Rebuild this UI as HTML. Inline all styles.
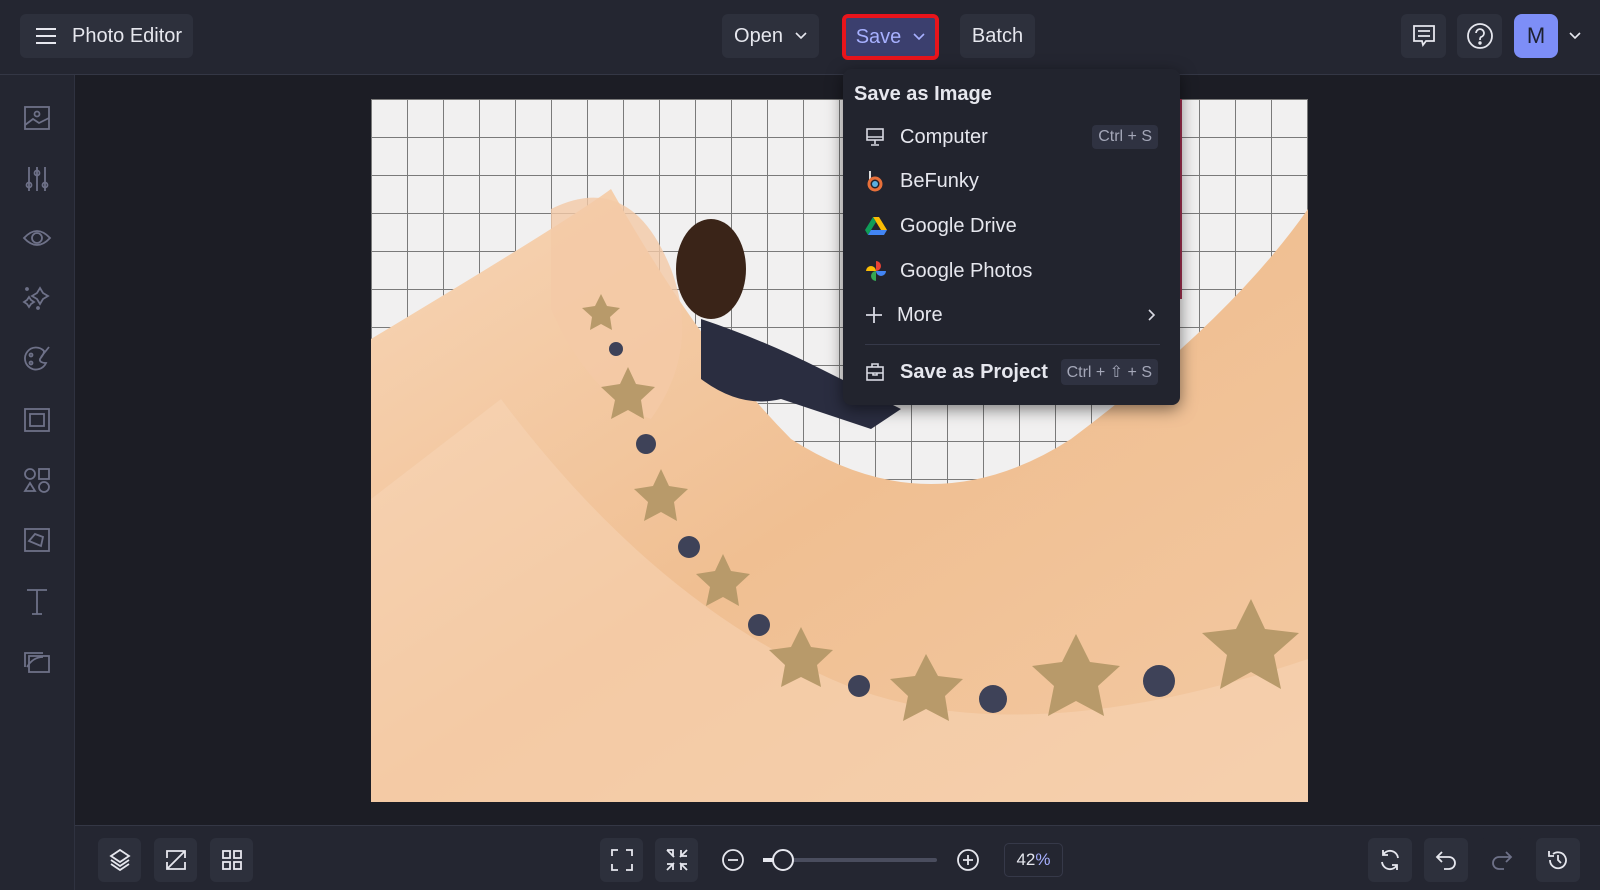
<!DOCTYPE html>
<html><head><meta charset="utf-8"><style>
*{margin:0;padding:0;box-sizing:border-box}
body{width:1600px;height:890px;background:#1c1d25;font-family:"Liberation Sans",sans-serif;color:#e6e7ee;position:relative;overflow:hidden}
.top{position:absolute;left:0;top:0;width:1600px;height:75px;background:#242631;border-bottom:1px solid #343745}
.side{position:absolute;left:0;top:75px;width:75px;height:815px;background:#242631;border-right:1px solid #2f3240}
.bot{position:absolute;left:75px;top:825px;width:1525px;height:65px;background:#242631;border-top:1px solid #343745}
.btn{position:absolute;background:#2d303c;border-radius:6px;display:flex;align-items:center;justify-content:center;font-size:20px;color:#e6e7ee}
.ico{position:absolute}
.menu{position:absolute;left:843px;top:69px;width:337px;height:336px;background:#22242e;border-radius:8px;box-shadow:0 4px 16px rgba(0,0,0,.5)}
.mi{position:absolute;left:0;width:337px;height:40px;font-size:20px;display:flex;align-items:center}
.mi .t{position:absolute;left:57px}
.kb{position:absolute;right:22px;background:#2f3241;color:#a4a7b8;font-size:16px;padding:3px 6px;border-radius:4px}
.img{position:absolute;left:371px;top:99px;width:937px;height:703px;overflow:hidden;background:#f4d0ad}
</style></head><body>
<div class="top"></div>
<div class="btn" style="left:20px;top:14px;width:173px;height:44px;justify-content:flex-start;padding-left:14px">
<svg width="24" height="20" viewBox="0 0 24 20"><path d="M2 3h20M2 10h20M2 17h20" stroke="#e6e7ee" stroke-width="2"/></svg><span style="margin-left:14px">Photo Editor</span></div>
<div class="btn" style="left:722px;top:14px;width:97px;height:44px">Open<svg style="margin-left:12px" width="12" height="8"><path d="M1 1l5 5 5-5" stroke="#e6e7ee" fill="none" stroke-width="1.6"/></svg></div>
<div class="btn" style="left:842px;top:14px;width:97px;height:46px;background:#3b3f6e;border:4px solid #e8141b;color:#a7b0ff">Save<svg style="margin-left:12px" width="12" height="8"><path d="M1 1l5 5 5-5" stroke="#a7b0ff" fill="none" stroke-width="1.6"/></svg></div>
<div class="btn" style="left:960px;top:14px;width:75px;height:44px">Batch</div>
<div class="btn" style="left:1401px;top:14px;width:45px;height:44px"><svg width="26" height="26" viewBox="0 0 26 26" fill="none" stroke="#e6e7ee" stroke-width="1.8"><path d="M3 3h20v15H15l-3 4-1-4H3z"/><path d="M7 8h12M7 13h12"/></svg></div>
<div class="btn" style="left:1457px;top:14px;width:45px;height:44px"><svg width="28" height="28" viewBox="0 0 28 28" fill="none" stroke="#e6e7ee" stroke-width="1.8"><circle cx="14" cy="14" r="12"/><path d="M10 11a4 4 0 1 1 5 4c-1 .5-1 1.5-1 3"/><circle cx="14" cy="21" r=".8" fill="#e6e7ee"/></svg></div>
<div class="btn" style="left:1514px;top:14px;width:44px;height:44px;background:#7d8ef7;color:#1e2130;font-size:22px;border-radius:8px">M</div>
<svg class="ico" style="left:1569px;top:32px" width="12" height="8"><path d="M1 1l5 5 5-5" stroke="#e6e7ee" fill="none" stroke-width="1.6"/></svg>

<div class="side"></div>
<svg class="ico" style="left:0;top:93px" width="75" height="600" viewBox="0 0 75 600" fill="none" stroke="#6e7188" stroke-width="1.8">
<rect x="25" y="14" width="24" height="22"/><circle cx="37" cy="21" r="2.5"/><path d="M25 32l8-6 6 4 10-5"/>
<path d="M29 74v24M37 74v24M45 74v24"/><circle cx="29" cy="92" r="2.5"/><circle cx="37" cy="80" r="2.5"/><circle cx="45" cy="92" r="2.5"/>
<path d="M24 145q13-14 26 0q-13 14-26 0z"/><circle cx="37" cy="145" r="5"/>
<path d="M40 195l3 5 5 3-5 3-3 5-3-5-5-3 5-3z"/><path d="M29 204l2 3 3 2-3 2-2 3-2-3-3-2 3-2z"/><circle cx="27" cy="196" r="1"/><circle cx="38" cy="215" r="1"/>
<path d="M44 258a11 11 0 1 0 2 12c-3 0-7-1-6-4 1-2 4-4 4-8z"/><path d="M41 264l8-10"/><circle cx="31" cy="262" r="1.5"/><circle cx="31" cy="270" r="1.5"/>
<rect x="25" y="316" width="24" height="22"/><rect x="30" y="321" width="14" height="12"/>
<circle cx="30" cy="381" r="5"/><rect x="39" y="376" width="10" height="10"/><path d="M25 398l5-8 5 8z"/><circle cx="44" cy="394" r="5"/>
<rect x="25" y="436" width="24" height="22"/><path d="M29 448l6-7 8 3-2 9z"/>
<path d="M27 497h20M37 497v24M32 521h10"/>
<rect x="29" y="563" width="20" height="16"/><path d="M25 574v-14h18M27 574q6-10 16-10"/>
</svg>

<div class="img">
<svg width="937" height="703" viewBox="0 0 937 703">
<defs><pattern id="g" width="36" height="38" patternUnits="userSpaceOnUse"><rect width="36" height="38" fill="#f1f0f0"/><path d="M0 0H36M0 0V38" stroke="#7a7a7a" stroke-width="2"/></pattern>
<linearGradient id="f" x1="0" y1="0" x2="1" y2="1"><stop offset="0" stop-color="#f7d5b6"/><stop offset=".5" stop-color="#f0bf92"/><stop offset="1" stop-color="#f3c9a2"/></linearGradient></defs>
<rect width="937" height="703" fill="url(#g)"/>
<path d="M810 0v200" stroke="#a03050" stroke-width="2"/>
<path d="M0 240Q200 120 240 90Q330 250 420 340Q560 430 700 340Q860 220 937 110V703H0z" fill="url(#f)"/>
<path d="M180 110q80-40 120 60q30 80-20 150q-60-20-100-110z" fill="#f4c9a6" opacity=".8"/>
<ellipse cx="340" cy="170" rx="35" ry="50" fill="#3a2418"/>
<path d="M330 220q60 20 120 50l80 40-30 20-90-30q-40 10-80-20z" fill="#2a2d40"/>
<path d="M130 300Q280 500 460 580T937 560V703H0V400z" fill="#f7d6b8" opacity=".5"/>
<g fill="#b89a6a">
<path d="M230 195l6 12 13 2-10 9 2 13-11-6-11 6 2-13-10-9 13-2z"/>
<path d="M257 268l8 17 19 3-14 13 3 19-16-9-17 9 4-19-14-13 19-3z"/>
<path d="M290 370l8 17 19 3-14 13 3 19-16-9-17 9 4-19-14-13 19-3z"/>
<path d="M352 455l8 17 19 3-14 13 3 19-16-9-17 9 4-19-14-13 19-3z"/>
<path d="M430 528l10 20 22 3-16 15 4 22-20-10-20 10 4-22-16-15 22-3z"/>
<path d="M555 555l12 22 25 3-18 17 4 25-23-12-23 12 5-25-18-17 25-3z"/>
<path d="M705 535l14 28 30 4-22 20 6 30-28-15-28 15 6-30-22-20 30-4z"/>
<path d="M880 500l14 30 34 4-25 22 7 34-30-17-31 17 7-34-25-22 34-4z"/>
</g>
<g fill="#3e4258"><circle cx="245" cy="250" r="7"/><circle cx="275" cy="345" r="10"/><circle cx="318" cy="448" r="11"/><circle cx="388" cy="526" r="11"/><circle cx="488" cy="587" r="11"/><circle cx="622" cy="600" r="14"/><circle cx="788" cy="582" r="16"/></g>
</svg></div>

<div class="menu">
<div style="position:absolute;left:11px;top:14px;font-size:20px;font-weight:bold">Save as Image</div>
<div class="mi" style="top:48px"><svg style="position:absolute;left:22px" width="20" height="20" viewBox="0 0 20 20" fill="none" stroke="#d8d9e2" stroke-width="1.6"><rect x="2" y="2" width="16" height="11"/><path d="M2 10h16M10 13v4M6 18h8"/></svg><span class="t">Computer</span><span class="kb">Ctrl + S</span></div>
<div class="mi" style="top:92px"><svg style="position:absolute;left:22px" width="20" height="22" viewBox="0 0 20 22"><path d="M5 1v10" stroke="#ddd" stroke-width="2"/><circle cx="10" cy="14" r="6" fill="none" stroke="#e8703a" stroke-width="3"/><circle cx="10" cy="14" r="3" fill="#5bb0e0"/></svg><span class="t">BeFunky</span></div>
<div class="mi" style="top:137px"><svg style="position:absolute;left:22px" width="22" height="20" viewBox="0 0 22 20"><path d="M8 1h6l8 13h-6z" fill="#fbbc04"/><path d="M8 1L0 14l3 5 8-13z" fill="#0f9d58"/><path d="M3 19h16l3-5H6z" fill="#4285f4"/></svg><span class="t">Google Drive</span></div>
<div class="mi" style="top:182px"><svg style="position:absolute;left:22px" width="22" height="22" viewBox="0 0 22 22"><path d="M11 11V1a5 5 0 0 1 0 10" fill="#ea4335"/><path d="M11 11h10a5 5 0 0 1-10 0" fill="#4285f4"/><path d="M11 11v10a5 5 0 0 1 0-10" fill="#34a853"/><path d="M11 11H1a5 5 0 0 1 10 0" fill="#fbbc04"/></svg><span class="t">Google Photos</span></div>
<div class="mi" style="top:226px"><svg style="position:absolute;left:22px" width="18" height="18"><path d="M9 1v16M1 9h16" stroke="#d8d9e2" stroke-width="1.8"/></svg><span class="t" style="left:54px">More</span><svg style="position:absolute;right:24px" width="8" height="12"><path d="M1 1l5 5-5 5" stroke="#d8d9e2" fill="none" stroke-width="1.6"/></svg></div>
<div style="position:absolute;left:22px;top:275px;width:295px;height:1px;background:#363949"></div>
<div class="mi" style="top:283px"><svg style="position:absolute;left:22px" width="20" height="20" viewBox="0 0 20 20" fill="none" stroke="#d8d9e2" stroke-width="1.6"><rect x="2" y="5" width="16" height="13"/><path d="M7 5V2h6v3M2 11h16M8 11v2h4v-2"/></svg><span class="t" style="font-weight:bold">Save as Project</span><span class="kb">Ctrl + ⇧ + S</span></div>
</div>

<div class="bot"></div>
<div class="btn" style="left:98px;top:838px;width:43px;height:44px"><svg width="26" height="26" viewBox="0 0 26 26" fill="none" stroke="#e6e7ee" stroke-width="1.8"><path d="M13 3l9 6-9 6-9-6z"/><path d="M4 13l9 6 9-6M4 17l9 6 9-6"/></svg></div>
<div class="btn" style="left:154px;top:838px;width:43px;height:44px"><svg width="24" height="24" viewBox="0 0 24 24" fill="none" stroke="#e6e7ee" stroke-width="1.8"><path d="M3 10V3h18v7M3 14v7h18v-7M3 21L21 3"/></svg></div>
<div class="btn" style="left:210px;top:838px;width:43px;height:44px"><svg width="22" height="22" viewBox="0 0 22 22" fill="none" stroke="#e6e7ee" stroke-width="1.8"><rect x="2" y="2" width="7" height="7"/><rect x="13" y="2" width="7" height="7"/><rect x="2" y="13" width="7" height="7"/><rect x="13" y="13" width="7" height="7"/></svg></div>
<div class="btn" style="left:600px;top:838px;width:43px;height:44px"><svg width="24" height="24" viewBox="0 0 24 24" fill="none" stroke="#e6e7ee" stroke-width="1.8"><path d="M2 8V2h6M16 2h6v6M22 16v6h-6M8 22H2v-6"/></svg></div>
<div class="btn" style="left:655px;top:838px;width:43px;height:44px"><svg width="24" height="24" viewBox="0 0 24 24" fill="none" stroke="#e6e7ee" stroke-width="1.8"><path d="M2 2h6v6M2 2l7 7M22 2l-7 7M16 2v6h6M2 22l7-7M2 16h6v6M22 22l-7-7M16 22v-6h6"/></svg></div>
<svg class="ico" style="left:721px;top:848px" width="24" height="24" viewBox="0 0 24 24" fill="none" stroke="#e6e7ee" stroke-width="1.8"><circle cx="12" cy="12" r="10"/><path d="M7 12h10"/></svg>
<div style="position:absolute;left:763px;top:858px;width:174px;height:4px;background:#4a4d5e;border-radius:2px"></div>
<div style="position:absolute;left:763px;top:858px;width:12px;height:4px;background:#e6e7ee"></div>
<div style="position:absolute;left:772px;top:849px;width:22px;height:22px;border:2px solid #e6e7ee;border-radius:50%;background:#242631"></div>
<svg class="ico" style="left:956px;top:848px" width="24" height="24" viewBox="0 0 24 24" fill="none" stroke="#e6e7ee" stroke-width="1.8"><circle cx="12" cy="12" r="10"/><path d="M7 12h10M12 7v10"/></svg>
<div style="position:absolute;left:1004px;top:843px;width:59px;height:34px;border:1px solid #363949;border-radius:5px;font-size:17px;display:flex;align-items:center;justify-content:center">42<span style="color:#a7b0ff">%</span></div>
<div class="btn" style="left:1368px;top:838px;width:44px;height:44px"><svg width="24" height="24" viewBox="0 0 24 24" fill="none" stroke="#e6e7ee" stroke-width="1.8"><path d="M20 10A8 8 0 0 0 5 7M4 14a8 8 0 0 0 15 3M5 2v5h5M19 22v-5h-5"/></svg></div>
<div class="btn" style="left:1424px;top:838px;width:44px;height:44px"><svg width="24" height="24" viewBox="0 0 24 24" fill="none" stroke="#e6e7ee" stroke-width="1.8"><path d="M8 4L3 9l5 5M3 9h12a6 6 0 0 1 0 12h-5"/></svg></div>
<div class="btn" style="left:1480px;top:838px;width:44px;height:44px;background:#242631"><svg width="24" height="24" viewBox="0 0 24 24" fill="none" stroke="#6e7188" stroke-width="1.8"><path d="M16 4l5 5-5 5M21 9H9a6 6 0 0 0 0 12h5"/></svg></div>
<div class="btn" style="left:1536px;top:838px;width:44px;height:44px"><svg width="24" height="24" viewBox="0 0 24 24" fill="none" stroke="#e6e7ee" stroke-width="1.8"><path d="M4 12a8 8 0 1 0 3-6M3 3v5h5M12 7v5l3 3"/></svg></div>
</body></html>
